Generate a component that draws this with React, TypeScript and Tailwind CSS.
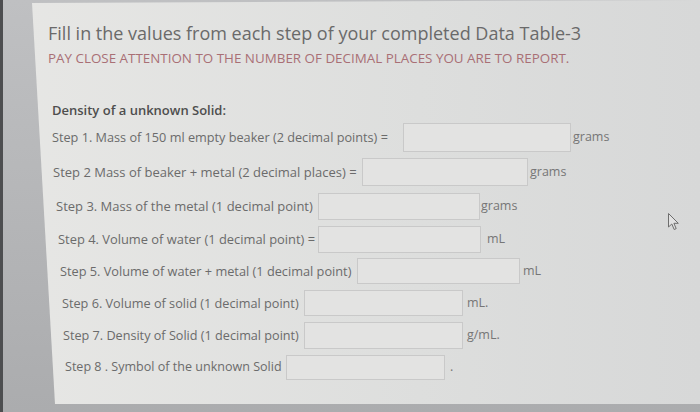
import React from "react";

type Row = {
  x: number;
  top: number;
  boxX: number;
  boxW: number;
  boxH: number;
  label: string;
  unit: string;
  gap: number;
  fs: number;
};

const rows: Row[] = [
  { x: 52, top: 3, boxX: 403, boxW: 168, boxH: 29, label: "Step 1. Mass of 150 ml empty beaker (2 decimal points) =", unit: "grams", gap: 2, fs: 12.7 },
  { x: 53, top: 5, boxX: 362, boxW: 166, boxH: 28, label: "Step 2 Mass of beaker + metal (2 decimal places) =", unit: "grams", gap: 2, fs: 13 },
  { x: 56, top: 4, boxX: 318, boxW: 162, boxH: 27, label: "Step 3. Mass of the metal (1 decimal point)", unit: "grams", gap: 1, fs: 13 },
  { x: 58, top: 3, boxX: 318, boxW: 163, boxH: 27, label: "Step 4. Volume of water (1 decimal point) =", unit: "mL", gap: 6, fs: 12.9 },
  { x: 60, top: 2, boxX: 357, boxW: 163, boxH: 26, label: "Step 5. Volume of water + metal (1 decimal point)", unit: "mL", gap: 3, fs: 12.75 },
  { x: 62, top: 2, boxX: 304, boxW: 159, boxH: 26, label: "Step 6. Volume of solid (1 decimal point)", unit: "mL.", gap: 4, fs: 12.7 },
  { x: 63, top: 2, boxX: 304, boxW: 159, boxH: 27, label: "Step 7. Density of Solid (1 decimal point)", unit: "g/mL.", gap: 4, fs: 12.65 },
  { x: 65, top: 2, boxX: 286, boxW: 159, boxH: 25, label: "Step 8 . Symbol of the unknown Solid", unit: ".", gap: 5, fs: 12.55 },
];

export default function App() {
  return (
    <div
      className="relative w-[700px] h-[412px] overflow-hidden bg-[linear-gradient(to_bottom,#bfc0c2,#abacae)]"
      style={{ fontFamily: '"Open Sans", "Noto Sans", sans-serif' }}
    >
      <div className="absolute left-0 top-0 h-full w-[3px] bg-[#4d4e50]" />
      <div className="h-[404px] bg-[linear-gradient(to_right,#e7e7e5,#dddedd_60%,#d7d8d8)] [clip-path:polygon(32px_3px,100%_0,100%_100%,55px_100%)] pt-[21px]">
        <div className="ml-[48px] text-[18px] leading-[24px] text-[#6a6a6a] whitespace-nowrap">
          Fill in the values from each step of your completed Data Table-3
        </div>
        <div className="ml-[48px] mt-[4px] text-[13.4px] leading-[18px] text-[#a96f75] whitespace-nowrap">
          PAY CLOSE ATTENTION TO THE NUMBER OF DECIMAL PLACES YOU ARE TO REPORT.
        </div>
        <div className="ml-[52px] mt-[34px] text-[13px] leading-[18px] font-semibold text-[#4e4e4e] whitespace-nowrap">
          Density of a unknown Solid:
        </div>
        {rows.map((r, i) => (
          <div
            key={i}
            className="flex items-center h-[30px]"
            style={{ marginTop: r.top, marginLeft: r.x }}
          >
            <span
              className="shrink-0 whitespace-nowrap leading-[18px] text-[#6b6b6b]"
              style={{ width: r.boxX - r.x, fontSize: r.fs }}
            >
              {r.label}
            </span>
            <div
              className="shrink-0 border border-[#c9c9c9] bg-[#e3e3e2]"
              style={{ width: r.boxW, height: r.boxH }}
            />
            <span
              className="whitespace-nowrap text-[12.5px] leading-[18px] text-[#767676]"
              style={{ marginLeft: r.gap }}
            >
              {r.unit}
            </span>
          </div>
        ))}
      </div>
      <svg
        className="absolute left-[667px] top-[212px]"
        width="14"
        height="20"
        viewBox="0 0 14 20"
      >
        <path
          d="M1.5 1.5 L1.5 15 L4.8 12 L7.2 17.5 L9.2 16.6 L6.9 11.3 L11.3 11.3 Z"
          fill="#e2e2e2"
          stroke="#6d6d6d"
          strokeWidth="1"
          strokeLinejoin="round"
        />
      </svg>
    </div>
  );
}
